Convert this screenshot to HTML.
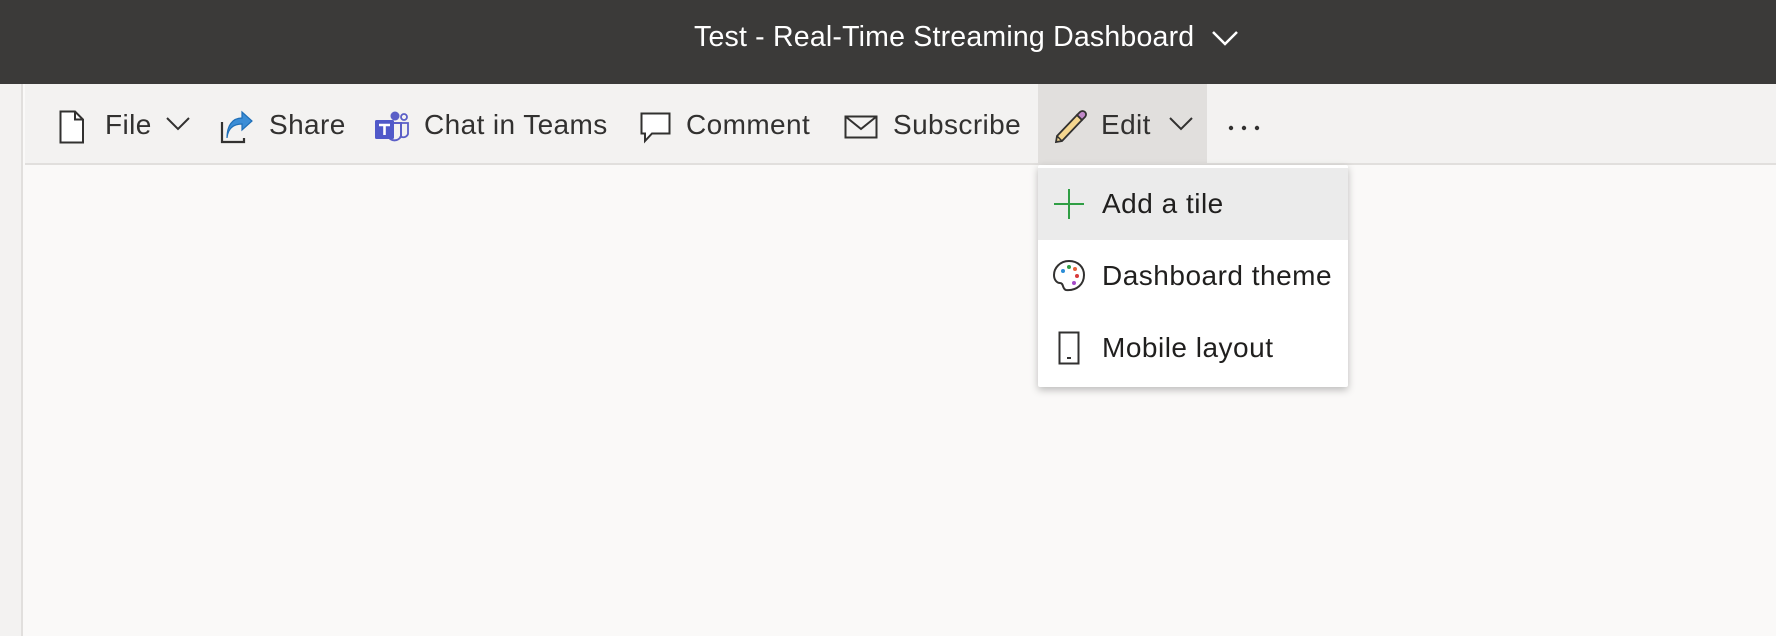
<!DOCTYPE html>
<html><head><meta charset="utf-8"><style>
*{margin:0;padding:0;box-sizing:border-box}
body{width:1776px;height:636px;overflow:hidden;background:#faf9f8;font-family:"Liberation Sans",sans-serif;position:relative;color:#323130}
.hdr{position:absolute;left:0;top:0;width:1776px;height:84px;background:#3b3a39}
.title{position:absolute;left:694px;top:21px;font-size:28.5px;letter-spacing:0.2px;color:#fff;white-space:nowrap}
.left{position:absolute;left:0;top:84px;width:23px;height:552px;background:#f3f2f1;border-right:2px solid #e1dfdd}
.tb{position:absolute;left:25px;top:84px;width:1751px;height:81px;background:#f3f2f1;border-bottom:2px solid #e1dfdd}
.t{position:absolute;top:109px;font-size:28px;letter-spacing:0.4px;white-space:nowrap;color:#323130}
.ic{position:absolute}
.editbg{position:absolute;left:1038px;top:84px;width:169px;height:81px;background:#e1dfdd}
.menu{position:absolute;left:1038px;top:165px;width:310px;height:222px;background:#fff;box-shadow:0 3px 8px rgba(0,0,0,.25);border-radius:2px}
.hl{position:absolute;left:0;top:3px;width:310px;height:72px;background:#ebebeb}
.mt{position:absolute;left:64px;font-size:28px;letter-spacing:0.5px;color:#201f1e;white-space:nowrap}
</style></head><body>
<div class="hdr"></div>
<div class="title">Test - Real-Time Streaming Dashboard</div>
<svg class="ic" style="left:1210px;top:28px" width="30" height="20" viewBox="0 0 30 20"><path d="M3 4 L15 16 L27 4" fill="none" stroke="#fff" stroke-width="2.5"/></svg>
<div class="left"></div>
<div class="tb"></div>
<div class="editbg"></div>
<svg class="ic" style="left:59px;top:110px" width="26" height="34" viewBox="0 0 26 34"><path d="M1.5 1.5 H16 L24 9.5 V32.5 H1.5 Z" fill="#fff" stroke="#323130" stroke-width="2"/><path d="M16 1.5 V9.5 H24" fill="none" stroke="#323130" stroke-width="2"/></svg>
<div class="t" style="left:105px">File</div>
<svg class="ic" style="left:165px;top:116px" width="26" height="16" viewBox="0 0 26 16"><path d="M2 2 L13 13 L24 2" fill="none" stroke="#323130" stroke-width="2"/></svg>
<svg class="ic" style="left:220px;top:110px" width="34" height="34" viewBox="0 0 34 34"><path d="M2 12 V32 H24 V28" fill="none" stroke="#323130" stroke-width="2.2"/><path d="M7 28 C8 18 14 14 22 14 V20 L32 11 L22 2 V8 C12 8 7 16 7 28Z" fill="#3b8dd6" stroke="#1f6fb8" stroke-width="1.2"/></svg>
<div class="t" style="left:269px">Share</div>
<svg class="ic" style="left:374px;top:110px" width="36" height="34" viewBox="0 0 36 34"><circle cx="21" cy="6" r="4.5" fill="#5b5fc7"/><circle cx="30" cy="7" r="3" fill="none" stroke="#5b5fc7" stroke-width="1.8"/><path d="M26 13 H34 V24 A5 5 0 0 1 26 26" fill="none" stroke="#5b5fc7" stroke-width="1.8"/><path d="M14 13 H27 V26 A7 7 0 0 1 14 26Z" fill="none" stroke="#5b5fc7" stroke-width="2"/><rect x="1" y="10" width="19" height="19" rx="1.5" fill="#5059c9"/><path d="M5 15 H16 M10.5 15 V25" stroke="#fff" stroke-width="2.6"/></svg>
<div class="t" style="left:424px">Chat in Teams</div>
<svg class="ic" style="left:640px;top:112px" width="32" height="32" viewBox="0 0 32 32"><path d="M1.5 1.5 H29.5 V21.5 H12 L5 29 V21.5 H1.5Z" fill="#fff" stroke="#323130" stroke-width="2"/></svg>
<div class="t" style="left:686px">Comment</div>
<svg class="ic" style="left:844px;top:115px" width="34" height="24" viewBox="0 0 34 24"><rect x="1.5" y="1.5" width="31" height="21" fill="none" stroke="#323130" stroke-width="2"/><path d="M1.5 1.5 L17 14 L32.5 1.5" fill="none" stroke="#323130" stroke-width="2"/></svg>
<div class="t" style="left:893px">Subscribe</div>
<svg class="ic" style="left:1053px;top:110px" width="34" height="34" viewBox="0 0 34 34"><path d="M4 26 L24 5 L29 10 L9 31 L3 32 Z" fill="#f4d68f" stroke="#323130" stroke-width="1.8"/><path d="M24 5 L27 2 A2.5 2.5 0 0 1 32 7 L29 10 Z" fill="#c088c8" stroke="#323130" stroke-width="1.8"/><path d="M4 26 L9 31" stroke="#323130" stroke-width="1.5"/></svg>
<div class="t" style="left:1101px">Edit</div>
<svg class="ic" style="left:1168px;top:116px" width="26" height="16" viewBox="0 0 26 16"><path d="M2 2 L13 13 L24 2" fill="none" stroke="#323130" stroke-width="2"/></svg>
<svg class="ic" style="left:1227px;top:124px" width="34" height="8" viewBox="0 0 34 8"><circle cx="4" cy="4" r="2.2" fill="#323130"/><circle cx="17" cy="4" r="2.2" fill="#323130"/><circle cx="30" cy="4" r="2.2" fill="#323130"/></svg>
<div class="menu">
<div class="hl"></div>
<svg class="ic" style="left:15px;top:23px" width="32" height="32" viewBox="0 0 32 32"><path d="M16 1 V31 M1 16 H31" stroke="#2f9e44" stroke-width="2"/></svg>
<div class="mt" style="top:23px">Add a tile</div>
<svg class="ic" style="left:14px;top:94px" width="34" height="34" viewBox="0 0 34 34"><path d="M17 2 C8 2 2 9 2 16 C2 21 5 24 8 24 C12 24 10 30 14 31 C25 32 32 25 32 16 C32 8 26 2 17 2Z" fill="none" stroke="#323130" stroke-width="2"/><circle cx="11" cy="12" r="2" fill="#2b8dd6"/><circle cx="17" cy="8" r="2" fill="#2f9e44"/><circle cx="23" cy="10" r="2" fill="#e8633a"/><circle cx="25" cy="17" r="2" fill="#d83b3b"/><circle cx="22" cy="24" r="2" fill="#a54ac8"/></svg>
<div class="mt" style="top:95px">Dashboard theme</div>
<svg class="ic" style="left:20px;top:166px" width="22" height="34" viewBox="0 0 22 34"><rect x="1.5" y="1.5" width="19" height="31" fill="none" stroke="#323130" stroke-width="2"/><path d="M9 27 H13" stroke="#323130" stroke-width="2"/></svg>
<div class="mt" style="top:167px">Mobile layout</div>
</div>
</body></html>
